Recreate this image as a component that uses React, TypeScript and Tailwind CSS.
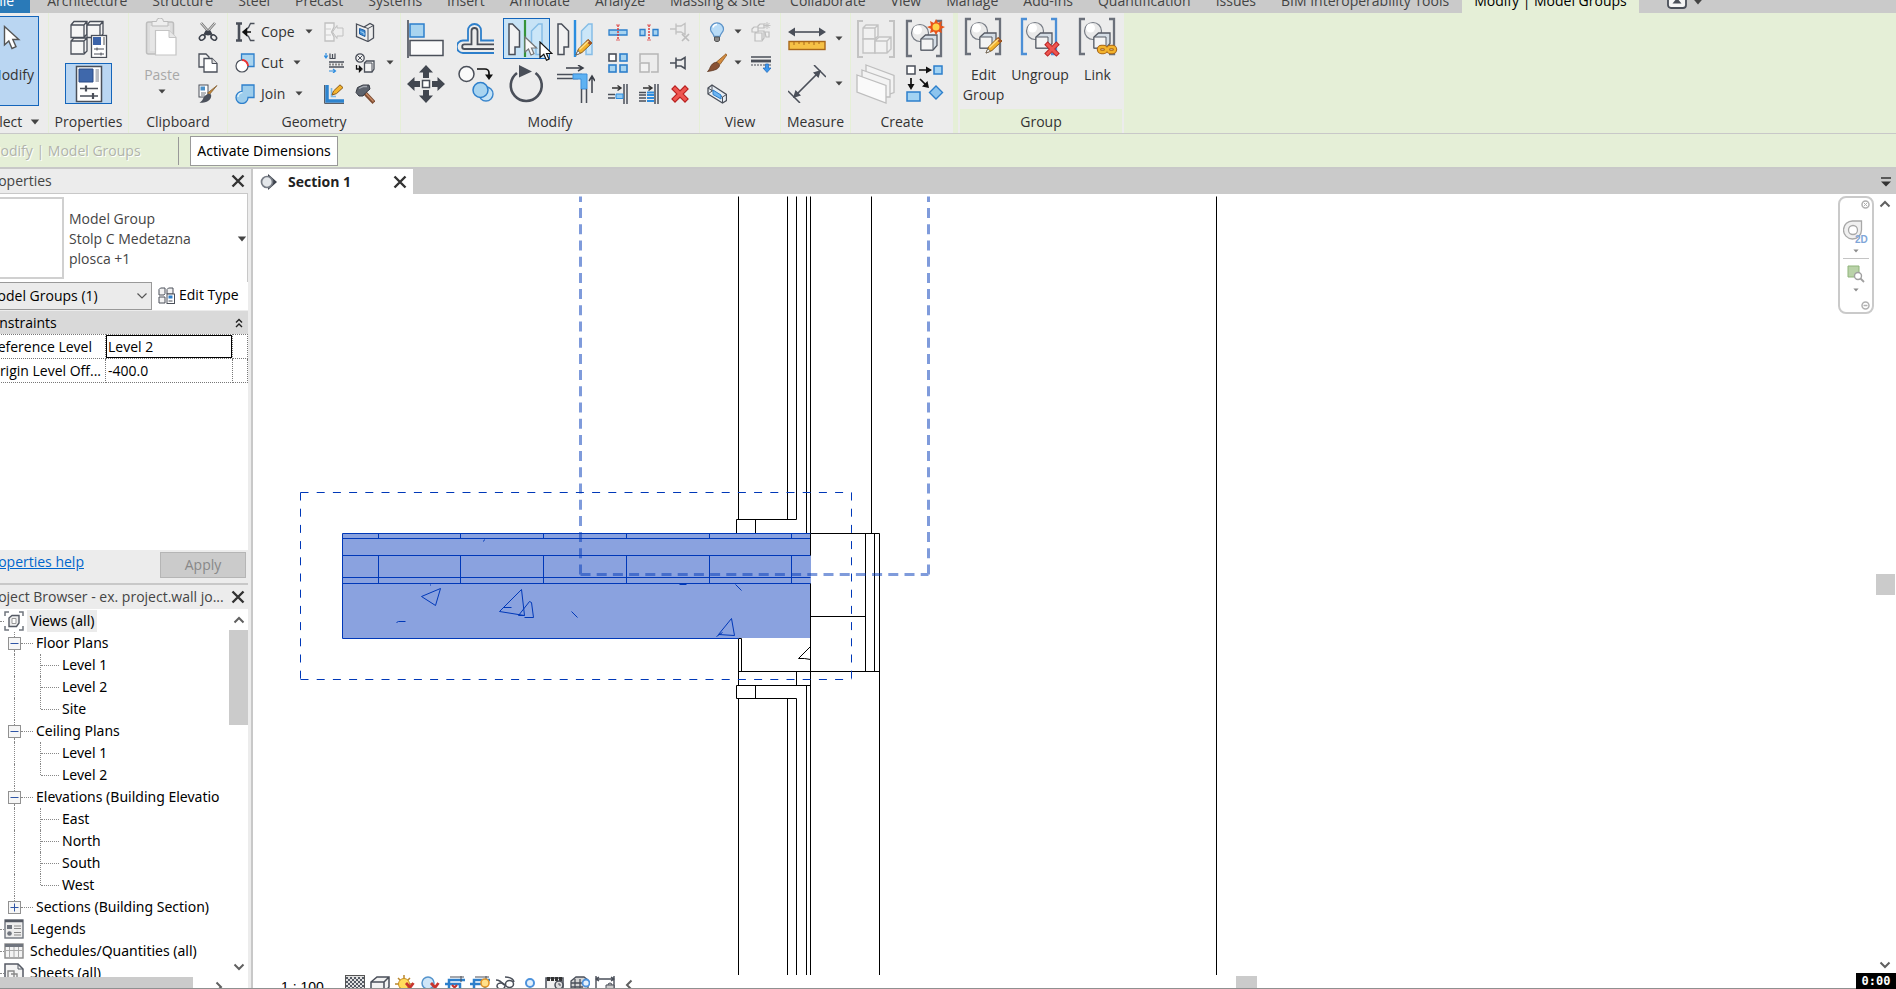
import React, { FC, ReactNode } from 'react';

const BLUE = '#0038b8';
const INK = '#4a4f59';

const tabs = [
  'Architecture',
  'Structure',
  'Steel',
  'Precast',
  'Systems',
  'Insert',
  'Annotate',
  'Analyze',
  'Massing & Site',
  'Collaborate',
  'View',
  'Manage',
  'Add-Ins',
  'Quantification',
  'Issues',
  'BIM Interoperability Tools',
];

/* ---------- small building blocks ---------- */

const Svg: FC<{ s: number; h?: number; children: ReactNode }> = ({ s, h, children }) => (
  <svg width={s} height={h || s} viewBox={`0 0 ${s} ${h || s}`} fill="none" className="block shrink-0">
    {children}
  </svg>
);

const Arrow: FC<{ big?: boolean; pale?: boolean }> = ({ big, pale }) => (
  <svg width={big ? 10 : pale ? 6 : 8} height={big ? 6 : pale ? 4 : 5} viewBox="0 0 8 5" className="shrink-0">
    <path d="M0.5 0.5h7L4 4.5z" fill={pale ? '#8c8c8c' : '#444'} />
  </svg>
);

const Close: FC = () => (
  <Svg s={14}>
    <path d="M1.500 1.500l11 11M12.500 1.500l-11 11" stroke="#333" strokeWidth="2.400" />
  </Svg>
);

const Chevron: FC<{ d: string }> = ({ d }) => (
  <Svg s={12}>
    <path d={d} stroke="#606060" strokeWidth="2" />
  </Svg>
);

const Tool: FC<{ label: string; className?: string; children: ReactNode }> = ({ label, className, children }) => (
  <button aria-label={label} className={`flex items-center justify-center ${className || ''}`}>
    {children}
  </button>
);

const Panel: FC<{ title: ReactNode; className: string; children: ReactNode; green?: boolean }> = ({
  title,
  className,
  children,
  green,
}) => (
  <section className={`flex shrink-0 flex-col border-r border-[#e5efd7] bg-[#ececec] ${className}`}>
    <div className="flex h-24 pt-[3px]">{children}</div>
    <h2 className={`flex h-6 items-center justify-center gap-2 pt-0.5 ${green ? 'mx-0.5 bg-[#e5efd7]' : ''}`}>{title}</h2>
  </section>
);

const Pencil: FC<{ x: number; y: number }> = ({ x, y }) => (
  <g transform={`translate(${x} ${y})`}>
    <path d="M1 17l2.500-6L13 1.500l4 3.500L7 14.500z" fill="#f3b32c" stroke="#8a5a16" />
    <path d="M11 3.500l2-2.200 4 3.600-2.200 2z" fill="#a5522a" />
    <path d="M4.500 11.500l9-8.500" stroke="#ffe08a" strokeWidth="1.500" />
    <path d="M1 17l1.800-4.300 2.600 2.600z" fill="#fff" stroke="#555" strokeWidth=".7" />
  </g>
);

const Cross: FC<{ x: number; y: number; s: number }> = ({ x, y, s }) => (
  <g transform={`translate(${x} ${y}) scale(${s / 16})`}>
    <path d="M3 3l10 10M13 3L3 13" stroke="#b8201f" strokeWidth="5.500" strokeLinecap="square" />
    <path d="M3 3l10 10M13 3L3 13" stroke="#ee5550" strokeWidth="3.300" strokeLinecap="square" />
  </g>
);

/* ---------- ribbon icons ---------- */

const CursorIcon = () => (
  <Svg s={18} h={26}>
    <path d="M1.500 1.500v18.500l4.300-4 3.200 7.500 4-1.800-3.200-7.200h6z" fill="#fff" stroke="#555" strokeWidth="1.400" />
  </Svg>
);

const TypePropsIcon = () => (
  <Svg s={38}>
    <g fill="#f5f5f5" stroke={INK} strokeWidth="1.300">
      <path d="M1 5l3-3.500h13V14l-3 3.500H1zM1 5h13v12M14 5l3-3.500" />
      <path d="M17 5l3-3.500h13V14l-3 3.500H17zM17 5h13v12M30 5l3-3.500" />
      <path d="M1 21l3-3h13v13l-3 3H1zM1 21h13v12M14 21l3-3" />
    </g>
    <rect x="21.500" y="15.500" width="15" height="22" fill="#fff" stroke={INK} strokeWidth="1.300" />
    <path d="M23 17h8v8h-8z" fill="#3c63a8" />
    <path d="M33 17h2v8h-2z" fill="#aaa" />
    <path d="M24 29h10M24 34h10M27 27.500v3M31 32.500v3" stroke={INK} />
  </Svg>
);

const PropsIcon = () => (
  <Svg s={28} h={38}>
    <rect x="1.500" y="1.500" width="25" height="35" fill="#fff" stroke={INK} strokeWidth="1.500" />
    <path d="M4 4h14v13H4z" fill="#3f68ab" stroke="#2b4b85" />
    <path d="M20.500 4H24v13h-3.500z" fill="#b9bcc2" />
    <path d="M5 23.500h18M5 31h18" stroke={INK} strokeWidth="1.500" />
    <path d="M11 20.500v6M18 28v6" stroke={INK} strokeWidth="2.200" />
  </Svg>
);

const PasteIcon = () => (
  <Svg s={34} h={40}>
    <rect x="1.500" y="4" width="27" height="32" rx="2" fill="#ddd" stroke="#bdbdbd" strokeWidth="1.500" />
    <path d="M5 8h20v25H5z" fill="#e6e6e6" />
    <path d="M7 3.500h4.500a3.500 3.500 0 017 0H23V8H7z" fill="#eee" stroke="#bbb" />
    <path d="M10.500 12.500H24l7 7V37H10.500z" fill="#fff" stroke="#c4c4c4" strokeWidth="1.200" />
    <path d="M24 12.500v7h7" stroke="#c4c4c4" fill="#e8e8e8" />
  </Svg>
);

const CutClipIcon = () => (
  <Svg s={20}>
    <path d="M3 1l11.500 13M17 1L5.500 14" stroke="#777" strokeWidth="2.600" />
    <path d="M3 1l11.500 13M17 1L5.500 14" stroke="#eee" strokeWidth=".9" />
    <path d="M7.500 8.500h5l2 4-4.500 1-4.500-1z" fill="#3c414b" />
    <ellipse cx="4.200" cy="15.500" rx="3" ry="2.300" transform="rotate(-40 4.200 15.500)" stroke="#3c414b" strokeWidth="1.600" />
    <ellipse cx="15.800" cy="15.500" rx="3" ry="2.300" transform="rotate(40 15.800 15.500)" stroke="#3c414b" strokeWidth="1.600" />
  </Svg>
);

const CopyIcon = () => (
  <Svg s={20}>
    <path d="M1 1h7l3 3v10H1z" fill="#f4f4f4" stroke={INK} strokeWidth="1.300" />
    <path d="M6 5.500h8l5 5V19H6z" fill="#fff" stroke={INK} strokeWidth="1.300" />
    <path d="M14 5.500v5h5" stroke={INK} fill="#ddd" />
  </Svg>
);

const MatchIcon = () => (
  <Svg s={20}>
    <rect x="1" y="1" width="9" height="12" fill="#fff" stroke={INK} />
    <path d="M2.500 2.500H7v4H2.500z" fill="#4a90c8" />
    <path d="M3 9h5M3 11h4" stroke={INK} strokeWidth=".8" />
    <path d="M19 1.500l-7.500 9-2-1.500z" fill="#c98b3c" stroke="#7a5526" strokeWidth=".7" />
    <path d="M13 10.500c1 3-1.500 6.500-5 7.500-3 .7-5 .8-6.500.8 2.500-1.500 3-3 4-5s4.500-5.500 7.500-3.300z" fill="#4c515b" />
  </Svg>
);

const CopeIcon = () => (
  <Svg s={20}>
    <path d="M1 1.500h6M1 18.500h6M4 2v16" stroke={INK} strokeWidth="2.600" />
    <path d="M19.500 1.500h-4l-2 4-3 2.500M19.500 18.500h-4l-2-4-3-2.500" stroke={INK} strokeWidth="1.300" />
    <path d="M16 10H9M11.500 7L8 10l3.500 3z" stroke="#111" strokeWidth="1.500" fill="#111" />
  </Svg>
);

const CutGeoIcon = () => (
  <Svg s={20}>
    <path d="M6.500 1h12.500v12.500h-7A6.500 6.500 0 006.500 7.500z" fill="#a9d4ef" stroke="#2d7fcb" strokeWidth="1.300" />
    <circle cx="7" cy="13" r="6" fill="#fff" stroke={INK} strokeWidth="1.200" />
    <path d="M7 7a6 6 0 016 6" stroke="#e33" strokeWidth="1.800" />
  </Svg>
);

const JoinIcon = () => (
  <Svg s={20}>
    <path d="M7 1h12v12.500h-6A6 6 0 117 7.500z" fill="#9dcdec" stroke="#2d7fcb" strokeWidth="1.300" />
    <path d="M3 13a4.500 4.500 0 014.500-4.500" stroke="#dff1fb" strokeWidth="1.500" />
  </Svg>
);

const WallOpenIcon = () => (
  <Svg s={20}>
    <path d="M1 1h9v4l-2.500 5L10 15v4H1z" fill="#f4f4f4" stroke="#c0c0c0" strokeWidth="1.300" />
    <path d="M1 7h6M1 13h6" stroke="#ccc" />
    <path d="M19 6v8h-6v2.500L8.500 10 13 3.500V6z" fill="#eee" stroke="#c0c0c0" />
  </Svg>
);

const FaceIcon = () => (
  <Svg s={20}>
    <path d="M1.500 2l7.500 3 6-3.500 3.500 2V16L13 19.500 1.500 14.500z" fill="#eee" stroke={INK} strokeWidth="1.300" />
    <path d="M9 5l4 1.500V19M13 6.500l5.500-3" stroke={INK} />
    <path d="M4.500 6.500l5.500 2v6l-5.500-2.500z" fill="#3d8bd4" stroke="#1f5fa5" />
    <path d="M5.500 9.500l3.500 1.500v2" stroke="#a9d4ef" />
  </Svg>
);

const WallJoinIcon = () => (
  <Svg s={20}>
    <path d="M2 0v4M.3 2.500L2 5l1.700-2.500M5 18h6M9 16l2.500 2L9 20" stroke="#2d8de0" strokeWidth="1.200" />
    <path d="M6 .5v5h5v-5M8.500 1v4" stroke={INK} strokeWidth="1.200" />
    <path d="M5 9h15M5 14h15" stroke={INK} strokeWidth="1.400" />
    <path d="M5 11.500h15" stroke="#888" strokeWidth="1.800" strokeDasharray="2 1" />
  </Svg>
);

const SplitFaceIcon = () => (
  <Svg s={20}>
    <circle cx="5" cy="5" r="4.200" fill="#eee" stroke={INK} strokeWidth="1.300" />
    <path d="M2.500 2.500l5 5M7.500 2.500l-5 5" stroke={INK} />
    <path d="M9.500 10l2-2H19v8l-2 3H9.500z" fill="#f4f4f4" stroke={INK} strokeWidth="1.300" />
    <path d="M9.500 10h7.500v9" stroke={INK} />
    <path d="M1.500 12v4H6M4.500 13.500L7 16l-2.500 2.500z" stroke="#111" strokeWidth="1.300" fill="none" />
  </Svg>
);

const PaintEdgeIcon = () => (
  <Svg s={20}>
    <path d="M3 1v16H20" stroke="#2d84cf" strokeWidth="3.500" />
    <path d="M7.500 4v8.500H12" stroke="#7ab8e8" strokeWidth="1.600" />
    <path d="M.6 1v18.400H20" stroke={INK} strokeWidth="1" />
    <path d="M8 11l1.500-4L16 .800l3 2.800-6.500 6z" fill="#f3b32c" stroke="#8a5a16" />
  </Svg>
);

const HammerIcon = () => (
  <Svg s={20}>
    <path d="M9 8l10 10.500" stroke="#7b4a30" strokeWidth="4" />
    <path d="M9.500 8l9 9.500" stroke="#c88a64" strokeWidth="1.300" />
    <path d="M1 8.500l1.500-5L8 1h6l1 4-4.500 4-2.500 3H4z" fill="#5d636d" stroke="#343942" />
    <path d="M4 4.500L8.500 2.500H12" stroke="#a4a9b1" strokeWidth="1.300" />
  </Svg>
);

const AlignIcon = () => (
  <Svg s={38}>
    <path d="M1 0v38" stroke={INK} strokeWidth="1.600" />
    <rect x="3" y="4" width="14" height="13" fill="#a8d4f0" stroke="#2d7fcb" strokeWidth="1.500" />
    <rect x="3" y="20.500" width="33" height="15" fill="#fafafa" stroke={INK} strokeWidth="1.500" />
  </Svg>
);

const OffsetIcon = () => (
  <Svg s={38} h={32}>
    <path d="M37 30H6a5 5 0 010-12.500h5V7.500a6.500 6.500 0 0113 0v10h13" stroke="#2d7fcb" strokeWidth="1.800" />
    <path d="M37 26H7.500a2.300 2.300 0 010-4.600h7V8a3 3 0 016 0v13.400H37" stroke={INK} strokeWidth="1.800" />
  </Svg>
);

const MirrorShape: FC<{ x: number; flip?: boolean }> = ({ x, flip }) => (
  <path
    d="M1 1h3.500L11.500 8v16H7v7.500H1z"
    transform={flip ? `translate(${x} 0) scale(-1 1)` : `translate(${x} 0)`}
    fill={flip ? '#cbe6f8' : '#f2f2f2'}
    stroke={flip ? '#86bde6' : INK}
    strokeWidth="1.500"
  />
);

const MirrorPickIcon = () => (
  <Svg s={38}>
    <g transform="translate(0 3)">
      <MirrorShape x={1} />
      <MirrorShape x={36} flip />
    </g>
    <path d="M18 0v37" stroke="#35953b" strokeWidth="2.200" />
    <path d="M18 17v15l3.500-3 2.500 6 3-1.300-2.500-5.700h5z" fill="#fafafa" stroke="#777" strokeWidth="1.200" />
  </Svg>
);

const MirrorDrawIcon = () => (
  <Svg s={38}>
    <g transform="translate(0 3)">
      <MirrorShape x={0} />
      <MirrorShape x={36} flip />
    </g>
    <path d="M18 0v37" stroke="#2b8ee0" strokeWidth="2.400" />
    <Pencil x={18} y={18} />
  </Svg>
);

const MoveIcon = () => (
  <Svg s={38}>
    <path
      d="M19 0l7 7.500h-4V13h-6V7.500h-4zM19 38l7-7.500h-4V25h-6v5.500h-4zM0 19l7.500-7v4H13v6H7.500v4zM38 19l-7.500-7v4H25v6h5.500v4z"
      fill="#424750"
    />
    <rect x="15.500" y="15.500" width="7" height="7" fill="#fff" stroke={INK} strokeWidth="1.500" />
  </Svg>
);

const CopyObjIcon = () => (
  <Svg s={38}>
    <circle cx="9.500" cy="9" r="7.500" fill="#fafafa" stroke={INK} strokeWidth="1.500" />
    <path d="M20 4h8a4 4 0 014 4v3" stroke="#111" strokeWidth="1.700" />
    <path d="M28 9.500h8L32 15z" fill="#111" />
    <circle cx="29" cy="29" r="7" fill="#c5e3f6" stroke="#3b86cc" strokeWidth="1.400" />
    <circle cx="23.500" cy="25" r="7.500" fill="#a8d4f0" stroke="#2d7fcb" strokeWidth="1.500" />
  </Svg>
);

const RotateIcon = () => (
  <Svg s={38}>
    <path d="M28.500 8A15.500 15.500 0 1110 8" stroke={INK} strokeWidth="2.600" />
    <path d="M12 0l13 6.500-13 6z" fill={INK} />
  </Svg>
);

const TrimIcon = () => (
  <Svg s={38}>
    <path d="M0 9.500h25M0 13.500h21" stroke={INK} strokeWidth="1.500" />
    <path d="M16 9v5h8v10h6V9z" fill="#5eb2f2" stroke="#3b8edb" />
    <path d="M24.500 24v14M29.500 24v14" stroke={INK} strokeWidth="1.500" />
    <path d="M9 3h16M21 0l5 3-5 3M35 28V12M32 16l3-5 3 5" stroke="#3b3f48" strokeWidth="1.500" />
  </Svg>
);

const SplitIcon: FC<{ gap?: boolean }> = ({ gap }) => (
  <Svg s={20}>
    {gap ? (
      <g fill="#a8d4f0" stroke="#2d7fcb" strokeWidth="1.300">
        <path d="M1 7.500h5v6H1zM14 7.500h5v6h-5z" />
      </g>
    ) : (
      <g fill="#a8d4f0" stroke="#2d7fcb" strokeWidth="1.300">
        <path d="M1 8h18v5H1z" />
      </g>
    )}
    <path d="M10 3v15" stroke="#d33" strokeWidth="1.400" strokeDasharray="2 1" />
    <path d="M8 3h4M8 18h4" stroke="#d66" />
  </Svg>
);

const ArrayIcon = () => (
  <Svg s={20}>
    <rect x="1" y="1" width="7" height="7" fill="#fff" stroke={INK} strokeWidth="1.600" />
    <g fill="#a8d4f0" stroke="#2d7fcb" strokeWidth="1.600">
      <rect x="12" y="1" width="7" height="7" />
      <rect x="1" y="12" width="7" height="7" />
      <rect x="12" y="12" width="7" height="7" />
    </g>
  </Svg>
);

const ScaleIcon = () => (
  <Svg s={20}>
    <path d="M1 9V1h18v18h-7" stroke="#b5b5b5" strokeWidth="1.500" />
    <rect x="1" y="10" width="9" height="9" fill="#f2f2f2" stroke="#b5b5b5" strokeWidth="1.500" />
  </Svg>
);

const PinIcon: FC<{ off?: boolean }> = ({ off }) => (
  <Svg s={20}>
    <path
      d="M0 10h6M6 4.500v11M6 7h5l4-2.500v11L11 13H6"
      stroke={off ? '#c2c2c2' : INK}
      strokeWidth={off ? '1.400' : '1.600'}
      transform={off ? 'translate(0 -3)' : undefined}
    />
    {off && <path d="M12 12l7 7M19 12l-7 7" stroke="#bdbdbd" strokeWidth="1.700" />}
  </Svg>
);

const ExtendIcon: FC<{ multi?: boolean }> = ({ multi }) => (
  <Svg s={20}>
    <path d="M16 0v20M19 0v20" stroke={INK} strokeWidth="1.500" />
    <path d="M4 4h8M9.500 1.500L13 4 9.500 6.500" stroke="#333" strokeWidth="1.400" />
    {multi ? (
      <>
        <path d="M0 8.500h7M0 11h7M0 14h7M0 17h7" stroke={INK} strokeWidth="1.300" />
        <path d="M8 8.500h7M8 11h7M8 14h7M8 17h7" stroke="#2d8de0" strokeWidth="1.800" />
      </>
    ) : (
      <>
        <path d="M0 10.500h7M0 14h7" stroke={INK} strokeWidth="1.300" />
        <path d="M8 10h7v4.500H8z" fill="#8ec8f2" stroke="#2d8de0" />
      </>
    )}
  </Svg>
);

const DeleteIcon = () => (
  <Svg s={20}>
    <Cross x={2} y={2} s={16} />
  </Svg>
);

const BulbIcon = () => (
  <Svg s={20}>
    <path d="M10 .8a6.500 6.500 0 016.500 6.500c0 3-3 4-3.500 7H7c-.5-3-3.500-4-3.500-7A6.500 6.500 0 0110 .8z" fill="#b9dcf7" stroke="#5d93c8" strokeWidth="1.200" />
    <path d="M6 5.500a4 4 0 014-3" stroke="#fff" strokeWidth="1.500" />
    <path d="M7.500 15h5v3.500l-1.500 1H9l-1.500-1z" fill="#888" stroke="#555" />
  </Svg>
);

const DisplaceIcon = () => (
  <Svg s={20}>
    <g fill="#efefef" stroke="#bdbdbd" strokeWidth="1.200">
      <path d="M4 11l2-2h7v7l-2 3H4zM4 11h7v7" />
      <path d="M1 7l2-2h4v5H1zM7 4l2-2h4v4H7zM14 10h4v5h-3z" />
    </g>
    <path d="M16 0v7M12.500 3.500h7M13.500 1l5 5M18.500 1l-5 5" stroke="#c2c2c2" />
  </Svg>
);

const BrushIcon = () => (
  <Svg s={20}>
    <path d="M19 .8l1 1L13 11.500 9.500 9z" fill="#d48b3e" stroke="#8b5620" strokeWidth=".8" />
    <path d="M12.500 12c0 4-5 5.500-12 6.500 2.500-2 2-4 4-6.500 1.500-2 4-3 5.500-2.500z" fill="#8a5234" stroke="#5d3722" strokeWidth=".8" />
  </Svg>
);

const LineworkIcon = () => (
  <Svg s={20}>
    <path d="M0 4h20" stroke={INK} strokeWidth="1.500" />
    <path d="M0 8h20" stroke={INK} strokeWidth="2.800" />
    <path d="M0 12h20" stroke={INK} strokeWidth="1.200" strokeDasharray="2 1" />
    <path d="M14.500 11h3v4h2.500L16 19.500 12 15h2.500z" fill="#3b97ee" stroke="#1d63b5" strokeWidth=".7" />
  </Svg>
);

const SectionBoxIcon = () => (
  <Svg s={20}>
    <path d="M1 4l4-3 14.500 9.500v6L15.500 19 1 10z" fill="#e8eef4" stroke={INK} strokeWidth="1.300" />
    <path d="M1 4l14.500 9 4-2.500M15.500 13v6M5 1v6L1 10" stroke={INK} />
    <path d="M6 6l8 5v4L6 10.500z" fill="#6db5f2" stroke="#2d7fcb" />
  </Svg>
);

const RulerIcon = () => (
  <Svg s={38} h={26}>
    <path d="M3 6h31" stroke={INK} strokeWidth="1.600" />
    <path d="M0 6l7-4.500v9zM38 6l-7-4.500v9z" fill={INK} />
    <rect x="1" y="15.500" width="36" height="8" fill="#f6c145" stroke="#a8671a" strokeWidth="1.400" />
    <path d="M6 15v4M11 15v3M16 15v4M21 15v3M26 15v4M31 15v3" stroke="#a8671a" />
  </Svg>
);

const DimIcon = () => (
  <Svg s={38}>
    <path d="M7 31L31 7" stroke={INK} strokeWidth="1.700" />
    <path d="M5 33l2.500-8 5.500 5.500zM33 5l-8 2.500 5.500 5.500z" fill={INK} />
    <path d="M0 26l12 12M26 0l12 12" stroke={INK} strokeWidth="1.500" />
  </Svg>
);

const CreateGroupIcon: FC = () => (
  <Svg s={38}>
    <path d="M6 1H1v36h5M32 1h5v36h-5" stroke="#c3c3c3" strokeWidth="2" />
    <g fill="#f1f1f1" stroke="#c3c3c3" strokeWidth="1.400">
      <path d="M6 8l3-3h12v11l-3 3H6zM6 8h12v10M18 8l3-3" />
      <path d="M6 19h12v14H6z" />
      <path d="M18 21l4-4h12v12l-4 4H18zM18 21h12v12M30 21l4-4" />
    </g>
  </Svg>
);

const GroupIcon: FC<{ blue?: boolean; children: ReactNode }> = ({ blue, children }) => (
  <Svg s={40}>
    <path d="M7 2H2v35h5M31 2h5v35h-5" stroke={blue ? '#4c8fd6' : '#6c717b'} strokeWidth="2.300" />
    <circle cx="15" cy="14" r="8.500" fill="#eaeaea" stroke="#777c85" strokeWidth="1.200" />
    <circle cx="12.500" cy="11" r="4.500" fill="#fff" />
    <path d="M16 20l4.500-4H32v10.500L28 31H16z" fill="#d5dde5" stroke="#555a64" strokeWidth="1.300" />
    <path d="M16 20h12v11H16z" fill="#f4f4f4" stroke="#555a64" />
    {children}
  </Svg>
);

const AssemblyIcon = () => (
  <Svg s={40}>
    <g fill="#f3f3f3" stroke="#bebebe" strokeWidth="1.300">
      <path d="M10 1l28 10.500v17l-6 2L10 20z" />
      <path d="M6 6l28 10v17H28L6 22z" />
      <path d="M1 11l29 10.500V39L1 28z" fill="#fafafa" />
    </g>
  </Svg>
);

const SimilarIcon = () => (
  <Svg s={40}>
    <rect x="2" y="2" width="8" height="8" fill="#fff" stroke={INK} strokeWidth="1.500" />
    <rect x="29" y="2" width="8" height="8" fill="#a2d3f3" stroke="#2d7fcb" strokeWidth="1.500" />
    <rect x="2" y="28" width="13" height="9" fill="#a2d3f3" stroke="#2d7fcb" strokeWidth="1.500" />
    <path d="M31 22l6.500 6.500L31 35l-6.500-6.500z" fill="#8cc4ee" stroke="#2d7fcb" strokeWidth="1.400" />
    <path d="M14 6h9M6 14v8M15 15l6 6" stroke="#111" strokeWidth="1.700" />
    <path d="M21 2.500L27 6l-6 3.500zM2.500 20h7L6 26zM24 24l-7-1.500 5.500-5.500z" fill="#111" />
  </Svg>
);

/* ---------- ribbon ---------- */

const GeoRow: FC<{ icon: ReactNode; label: string }> = ({ icon, label }) => (
  <button className="flex items-center gap-1.5">
    {icon}
    <span>{label}</span>
    <span className="ml-1">
      <Arrow />
    </span>
  </button>
);

const Ribbon: FC = () => (
  <div className="flex h-[121px] shrink-0 border-b border-[#c8c8c8] bg-[#e5efd7] text-[#333]">
    <Panel
      className="w-[73px]"
      title={
        <>
          Select <Arrow big />
        </>
      }
    >
      <button className="ml-2 flex h-[90px] w-[55px] flex-col items-center justify-between border border-[#1465bb] bg-[#bad6f2] pt-2 pb-5">
        <CursorIcon />
        Modify
      </button>
    </Panel>

    <Panel className="w-20" title="Properties">
      <div className="grid w-full grid-rows-[45px_45px] place-items-center">
        <Tool label="Type Properties">
          <TypePropsIcon />
        </Tool>
        <Tool label="Properties" className="h-[41px] w-[47px] border border-[#1465bb] bg-[#bad6f2]">
          <PropsIcon />
        </Tool>
      </div>
    </Panel>

    <Panel className="w-[99px]" title="Clipboard">
      <button className="flex w-[66px] flex-col items-center pt-0.5 text-[#a8a8a8]">
        <PasteIcon />
        <span className="pt-[7px] pb-1">Paste</span>
        <Arrow />
      </button>
      <div className="grid grid-rows-[31px_31px_31px] items-center pl-[3px]">
        <Tool label="Cut to Clipboard"><CutClipIcon /></Tool>
        <Tool label="Copy to Clipboard"><CopyIcon /></Tool>
        <Tool label="Match Type Properties"><MatchIcon /></Tool>
      </div>
    </Panel>

    <Panel className="w-[173px]" title="Geometry">
      <div className="grid w-24 shrink-0 grid-rows-[31px_31px_31px] items-center pl-[7px]">
        <GeoRow icon={<CopeIcon />} label="Cope" />
        <GeoRow icon={<CutGeoIcon />} label="Cut" />
        <GeoRow icon={<JoinIcon />} label="Join" />
      </div>
      <div className="grid grid-cols-[31px_31px_14px] grid-rows-[31px_31px_31px] items-center">
        <Tool label="Wall Opening" className="w-5"><WallOpenIcon /></Tool>
        <Tool label="Split Face" className="w-5"><FaceIcon /></Tool>
        <span />
        <Tool label="Beam Joins" className="w-5"><WallJoinIcon /></Tool>
        <Tool label="Paint" className="w-5"><SplitFaceIcon /></Tool>
        <Arrow />
        <Tool label="Wall Joins" className="w-5"><PaintEdgeIcon /></Tool>
        <Tool label="Demolish" className="w-5"><HammerIcon /></Tool>
      </div>
    </Panel>

    <Panel className="w-[299px]" title="Modify">
      <div className="grid grid-cols-[50px_50px_50px_50px] grid-rows-[45px_45px] place-items-center">
        <Tool label="Align"><AlignIcon /></Tool>
        <Tool label="Offset"><OffsetIcon /></Tool>
        <Tool label="Mirror - Pick Axis" className="relative h-[41px] w-[47px] border border-[#1465bb] bg-[#c7e3f6]">
          <MirrorPickIcon />
          <span className="absolute -right-1 -bottom-1">
            <svg width="14" height="21" viewBox="0 0 14 21">
              <path d="M1 1v15.500l3.800-3.200 2.700 6 2.500-1.200-2.500-5.600H13z" fill="#fff" stroke="#111" strokeWidth="1.200" />
            </svg>
          </span>
        </Tool>
        <Tool label="Mirror - Draw Axis"><MirrorDrawIcon /></Tool>
        <Tool label="Move"><MoveIcon /></Tool>
        <Tool label="Copy"><CopyObjIcon /></Tool>
        <Tool label="Rotate"><RotateIcon /></Tool>
        <Tool label="Trim/Extend to Corner"><TrimIcon /></Tool>
      </div>
      <div className="grid grid-cols-[31px_31px_20px] grid-rows-[31px_31px_31px] items-center pl-[7px]">
        <Tool label="Split Element" className="w-5"><SplitIcon /></Tool>
        <Tool label="Split with Gap" className="w-5"><SplitIcon gap /></Tool>
        <Tool label="Unpin" className="w-5"><PinIcon off /></Tool>
        <Tool label="Array" className="w-5"><ArrayIcon /></Tool>
        <Tool label="Scale" className="w-5"><ScaleIcon /></Tool>
        <Tool label="Pin" className="w-5"><PinIcon /></Tool>
        <Tool label="Trim/Extend Single" className="w-5"><ExtendIcon /></Tool>
        <Tool label="Trim/Extend Multiple" className="w-5"><ExtendIcon multi /></Tool>
        <Tool label="Delete" className="w-5"><DeleteIcon /></Tool>
      </div>
    </Panel>

    <Panel className="w-[81px]" title="View">
      <div className="grid grid-cols-[27px_17px_20px] grid-rows-[31px_31px_31px] items-center pl-[7px]">
        <Tool label="Hide in View" className="w-5"><BulbIcon /></Tool>
        <Arrow />
        <Tool label="Displace Elements"><DisplaceIcon /></Tool>
        <Tool label="Override Graphics" className="w-5"><BrushIcon /></Tool>
        <Arrow />
        <Tool label="Linework"><LineworkIcon /></Tool>
        <Tool label="Selection Box" className="w-5"><SectionBoxIcon /></Tool>
      </div>
    </Panel>

    <Panel className="w-[70px]" title="Measure">
      <div className="grid grid-cols-[47px_8px] grid-rows-[45px_45px] items-center pl-[7px]">
        <Tool label="Measure" className="w-[38px]"><RulerIcon /></Tool>
        <Arrow />
        <Tool label="Aligned Dimension" className="w-[38px]"><DimIcon /></Tool>
        <Arrow />
      </div>
    </Panel>

    <Panel className="w-[103px]" title="Create">
      <div className="grid w-[98px] grid-cols-2 grid-rows-[45px_45px] place-items-center">
        <Tool label="Create Assembly"><CreateGroupIcon /></Tool>
        <Tool label="Create Group">
          <GroupIcon>
            <path d="M31 0l2 4 4-2-1 4.500 4 1.500-4 2 1 4-4-1.500L31 16l-2-3.500-4 1.500 1-4-4-2 4-1.500L25 2l4 2z" fill="#e8541a" />
            <circle cx="31" cy="8" r="3.500" fill="#ffd34a" />
          </GroupIcon>
        </Tool>
        <Tool label="Create Parts"><AssemblyIcon /></Tool>
        <Tool label="Create Similar"><SimilarIcon /></Tool>
      </div>
    </Panel>

    <Panel className="ml-1 w-[167px]" title="Group" green>
      <div className="grid w-full grid-cols-[51px_62px_53px] leading-5">
        <button className="flex flex-col items-center pt-px">
          <GroupIcon>
            <Pencil x={21} y={19} />
          </GroupIcon>
          <span className="pt-2">
            Edit
            <br />
            Group
          </span>
        </button>
        <button className="flex flex-col items-center pt-px">
          <GroupIcon blue>
            <Cross x={25} y={25} s={14} />
          </GroupIcon>
          <span className="pt-2">Ungroup</span>
        </button>
        <button className="flex flex-col items-center pt-px">
          <GroupIcon>
            <g stroke="#a8671a" strokeWidth="4.500">
              <rect x="21" y="30" width="7" height="5" rx="2.500" />
              <rect x="30" y="30" width="7" height="5" rx="2.500" />
            </g>
            <g stroke="#f3b32c" strokeWidth="2.300">
              <rect x="21" y="30" width="7" height="5" rx="2.500" />
              <rect x="30" y="30" width="7" height="5" rx="2.500" />
            </g>
          </GroupIcon>
          <span className="pt-2">Link</span>
        </button>
      </div>
    </Panel>
  </div>
);

/* ---------- left column ---------- */

const PaneTitle: FC<{ children: ReactNode }> = ({ children }) => (
  <div className="flex h-6 shrink-0 items-center justify-between pr-[3px] pl-2 text-[#444]">
    <h2 className="truncate">{children}</h2>
    <button aria-label="Close pane" className="shrink-0">
      <Close />
    </button>
  </div>
);

const Properties: FC = () => (
  <section className="flex h-[416px] shrink-0 flex-col border-b-2 border-[#c8c8c8]">
    <PaneTitle>Properties</PaneTitle>
    <div className="flex h-[89px] items-center border-t border-r border-[#c8c8c8] bg-white">
      <div className="h-[82px] w-[88px] border-2 border-[#d0d0d0]" />
      <div className="flex flex-1 items-center justify-between pt-0.5 pl-[5px] leading-5 text-[#444]">
        <p>
          Model Group
          <br />
          Stolp C Medetazna
          <br />
          plosca +1
        </p>
        <button aria-label="Change type">
          <Arrow big />
        </button>
      </div>
    </div>
    <div className="flex h-7 items-center bg-white">
      <div className="relative">
        <select
          aria-label="Selection filter"
          className="h-7 w-44 appearance-none border border-[#999] bg-[#ebebeb] pl-2 text-black"
        >
          <option>Model Groups (1)</option>
        </select>
        <span className="pointer-events-none absolute top-2 right-1">
          <Svg s={12}>
            <path d="M1.500 3.500L6 8l4.500-4.500" stroke="#555" strokeWidth="1.200" />
          </Svg>
        </span>
      </div>
      <button className="flex items-center gap-1 pb-0.5 pl-1.5 text-black">
        <Svg s={17}>
          <path d="M1 2.500L2.500 1H7v5.500L6 8H1zM9 2.500L10.500 1H15v6H9zM1 10h6v6H1z" fill="#f3f3f3" stroke={INK} />
          <rect x="9" y="7" width="7.500" height="9.500" fill="#fff" stroke={INK} />
          <path d="M10.500 8.500h4v3h-4z" fill="#2d7fcb" />
          <path d="M10.500 14h4" stroke={INK} />
        </Svg>
        Edit Type
      </button>
    </div>
    <div className="flex-1 bg-white text-black">
      <div className="flex h-6 items-center justify-between border-t border-[#ececec] bg-[#d9d9d9] pr-1 pl-1.5">
        Constraints
        <button aria-label="Collapse Constraints">
          <Svg s={10}>
            <path d="M2 4.500L5 1.500l3 3M2 9l3-3 3 3" stroke="#222" strokeWidth="1.400" />
          </Svg>
        </button>
      </div>
      <table className="w-full table-fixed border-collapse">
        <tbody>
          <tr className="h-6">
            <th scope="row" className="w-[129px] border border-dotted border-[#777] p-0 pl-3 text-left font-normal">
              <label htmlFor="ref-level">Reference Level</label>
            </th>
            <td className="w-[127px] border border-dotted border-[#777] p-0">
              <input id="ref-level" defaultValue="Level 2" className="block h-[23px] w-full border border-black px-px" />
            </td>
            <td className="border border-dotted border-[#777] p-0" />
          </tr>
          <tr className="h-6">
            <th scope="row" className="border border-dotted border-[#777] p-0 pl-3 text-left font-normal">
              <label htmlFor="origin-offset">Origin Level Off...</label>
            </th>
            <td className="border border-dotted border-[#777] p-0">
              <input id="origin-offset" defaultValue="-400.0" className="block h-[22px] w-full px-0.5" />
            </td>
            <td className="border border-dotted border-[#777] p-0" />
          </tr>
        </tbody>
      </table>
    </div>
    <div className="flex h-[33px] items-start justify-between pt-0.5 pr-0.5 pl-2">
      <a href="#help" className="text-[#0066cc] underline">
        Properties help
      </a>
      <button disabled className="h-[26px] w-[86px] border border-[#b5b5b5] bg-[#cbcbcb] text-[#888]">
        Apply
      </button>
    </div>
  </section>
);

const ViewsIcon = () => (
  <Svg s={20}>
    <path d="M1 5V1h4M15 1h4v4M19 15v4h-4M5 19H1v-4" stroke="#70757e" strokeWidth="1.500" />
    <path d="M5 7l3-2.500h7V12l-2.500 3.500H5z" fill="#eee" stroke="#555a64" strokeWidth="1.400" />
    <path d="M8 7.500h4v5H8z" fill="#fff" stroke="#999" />
  </Svg>
);

const LegendIcon = () => (
  <Svg s={20}>
    <rect x="1" y="1" width="18" height="18" fill="#eee" stroke="#70757e" strokeWidth="1.400" />
    <path d="M1 2h18" stroke="#555a64" strokeWidth="2.500" />
    <path d="M3 6h5v4H3z" fill="#70757e" />
    <circle cx="5.500" cy="14.500" r="2.300" fill="#70757e" />
    <path d="M10 7h7M10 9.500h7M10 13.500h7M10 16h7" stroke="#888" />
  </Svg>
);

const ScheduleIcon = () => (
  <Svg s={20}>
    <rect x="1" y="3" width="18" height="14" fill="#f4f4f4" stroke="#888" strokeWidth="1.400" />
    <path d="M1 4.500h18" stroke="#70757e" strokeWidth="3" />
    <path d="M5.500 6v11M10 6v11M14.500 6v11M1 9.500h18" stroke="#aaa" />
  </Svg>
);

const SheetIcon = () => (
  <Svg s={20}>
    <path d="M1 1h13l5 5v13H1z" fill="#f4f4f4" stroke="#555a64" strokeWidth="1.500" />
    <path d="M14 1v5h5" stroke="#555a64" />
    <path d="M4 19V8h6v11M7 11h6v8" stroke="#888" strokeWidth="1.400" />
  </Svg>
);

const RootRow: FC<{ icon: ReactNode; label: string; selected?: boolean }> = ({ icon, label, selected }) => (
  <div className="flex h-[22px] items-center">
    <span className="w-1 border-t border-dotted border-[#888]" />
    {icon}
    <span className={`ml-[3px] px-[3px] leading-[22px] ${selected ? 'bg-[#ebebeb]' : ''}`}>{label}</span>
  </div>
);

const BranchRow: FC<{ label: string; closed?: boolean }> = ({ label, closed }) => (
  <div className="flex h-[22px] items-center">
    <span className="ml-2 flex h-full w-[13px] flex-col items-center">
      <span className="w-px flex-1 border-l border-dotted border-[#888]" />
      <button aria-label={closed ? `Expand ${label}` : `Collapse ${label}`}>
        <Svg s={13}>
          <rect x=".5" y=".5" width="12" height="12" fill="#f6f6f6" stroke="#919191" />
          <path d={closed ? 'M2.500 6.500h8M6.500 2.500v8' : 'M2.500 6.500h8'} stroke="#2f55a5" />
        </Svg>
      </button>
      <span className={`w-px flex-1 ${closed ? '' : 'border-l border-dotted border-[#888]'}`} />
    </span>
    <span className="mr-[3px] w-3 border-t border-dotted border-[#888]" />
    <span className="whitespace-nowrap">{label}</span>
  </div>
);

const LeafRow: FC<{ label: string; last?: boolean }> = ({ label, last }) => (
  <div className="flex h-[22px] items-center">
    <span className="ml-3.5 h-full w-[26px] border-l border-dotted border-[#888]" />
    <span className={`w-px self-start border-l border-dotted border-[#888] ${last ? 'h-[11px]' : 'h-full'}`} />
    <span className="mr-[3px] w-[18px] border-t border-dotted border-[#888]" />
    <span>{label}</span>
  </div>
);

const branches = [
  { label: 'Floor Plans', items: ['Level 1', 'Level 2', 'Site'] },
  { label: 'Ceiling Plans', items: ['Level 1', 'Level 2'] },
  { label: 'Elevations (Building Elevatio', items: ['East', 'North', 'South', 'West'] },
];

const ProjectBrowser: FC = () => (
  <section className="flex min-h-0 flex-1 flex-col">
    <PaneTitle>Project Browser - ex. project.wall jo...</PaneTitle>
    <div className="flex min-h-0 flex-1 bg-white">
      <div className="min-w-0 flex-1 overflow-hidden pt-px pl-6 font-['Noto_Sans','Open_Sans',sans-serif] text-black">
        <RootRow icon={<ViewsIcon />} label="Views (all)" selected />
        {branches.map((branch) => (
          <div key={branch.label}>
            <BranchRow label={branch.label} />
            {branch.items.map((item, i) => (
              <LeafRow key={item} label={item} last={i === branch.items.length - 1} />
            ))}
          </div>
        ))}
        <BranchRow label="Sections (Building Section)" closed />
        <RootRow icon={<LegendIcon />} label="Legends" />
        <RootRow icon={<ScheduleIcon />} label="Schedules/Quantities (all)" />
        <RootRow icon={<SheetIcon />} label="Sheets (all)" />
      </div>
      <div className="flex w-[19px] flex-col items-center">
        <span className="flex h-[21px] items-center">
          <Chevron d="M1.500 8.500L6 4l4.500 4.500" />
        </span>
        <span className="h-[95px] w-full bg-[#cbcbcb]" />
        <span className="mt-auto pb-1">
          <Chevron d="M1.500 3.500L6 8l4.500-4.500" />
        </span>
      </div>
    </div>
    <div className="flex h-[11px] items-start overflow-hidden bg-white">
      <span className="h-full w-[217px] bg-[#cbcbcb]" />
      <span className="ml-5 pt-1">
        <Chevron d="M3.500 1.500L8 6l-4.500 4.500" />
      </span>
    </div>
  </section>
);

/* ---------- drawing ---------- */

const slabJoints = [378, 460, 543, 626, 709, 791];

const Drawing: FC = () => (
  <svg className="absolute inset-0 h-full w-full" fill="none" strokeWidth="1">
    {/* model space is offset by the docked panels */}
    <g transform="translate(-252.5 -193.5)">
      <path
        stroke="#000"
        d="M738 196V519M787 196V519M796 196V519M806 196V533M810 196V975M871 196V533M736 533V519H796M755 519V533M810 533H879V975M865 533V671M874 533V671M810 616H865M738 671H879M738 685V638H741V671M796 671V685M736 698V685H810M755 685V698M736 698H796M738 698V975M787 698V975M796 698V975M806 685V975M810 646L798 658L804 658L810 659M1216 196V975"
      />
      <path fill="#8aa2df" d="M342 533H810.500V637.500H342z" />
      <g stroke={BLUE}>
        <path d="M810 533H342V638H738M342 538H810M342 555H810M342 577H810M342 583H810" />
        {slabJoints.map((x) => (
          <path key={x} d={`M${x} 533V538M${x} 555V583`} />
        ))}
        <path d="M421 596L440 588L435 605zM521 589L499 611L524 615L521 589M503 607H511M529 601L518 615H524M529 601L531 602L533 617H524M396 622L398 621H405M571 611L577 617M484 539L483 541M430 584v1M679 584H686M735 584L741 590M731 618L718 634L734 635zM716 636L722 632" />
        <path d="M300 492H851M300 679H851" strokeDasharray="8 8.200" />
        <path d="M300 492V679M851 492V679" strokeDasharray="8 8.200" />
      </g>
      <path d="M810 533V555M810 583V638" stroke="#000" />
      <path d="M580 574V196M580 574H928M928 574V196" stroke={BLUE} strokeOpacity=".5" strokeWidth="3" strokeDasharray="10 6.200" />
    </g>
  </svg>
);

const NavBar: FC = () => (
  <div className="absolute top-0.5 right-[22px] flex h-[118px] w-9 flex-col items-center justify-between rounded-lg border-2 border-[#cacaca] bg-white py-0.5">
    <button aria-label="Close navigation bar" className="self-end pr-0.5">
      <Svg s={9}>
        <circle cx="4.500" cy="4.500" r="3.500" stroke="#b0b0b0" strokeWidth="1.500" />
        <path d="M3 3l3 3M6 3L3 6" stroke="#b0b0b0" />
      </Svg>
    </button>
    <button className="flex flex-col items-center pt-1.5" aria-label="Steering wheel">
      <svg width="26" height="24" viewBox="0 0 26 24" fill="none">
        <path d="M10 1h8.500v9a9 9 0 11-8.500-9z" fill="#f0f0f0" stroke="#a8a8a8" strokeWidth="1.300" />
        <circle cx="10" cy="10" r="4.500" fill="#fff" stroke="#a8a8a8" strokeWidth="1.300" />
        <text x="12" y="22.500" fontSize="10" fontWeight="bold" fontFamily="Liberation Sans, sans-serif" fill="#7fa6d8">
          2D
        </text>
      </svg>
    </button>
    <Arrow pale />
    <span className="w-[26px] border-t border-[#c4c4c4]" />
    <button aria-label="Zoom region">
      <Svg s={18}>
        <path d="M1 1h11v11H1z" fill="#b9d2a8" stroke="#8fb47a" />
        <circle cx="11" cy="11" r="3.500" fill="#fff" stroke="#a0a0a0" strokeWidth="1.400" />
        <path d="M13.500 13.500L17 17" stroke="#a0a0a0" strokeWidth="1.800" />
      </Svg>
    </button>
    <span className="pb-1">
      <Arrow pale />
    </span>
    <button aria-label="Customize" className="self-end pr-0.5">
      <Svg s={9}>
        <circle cx="4.500" cy="4.500" r="3.500" stroke="#b0b0b0" strokeWidth="1.500" />
        <path d="M2.500 4.500h4" stroke="#b0b0b0" strokeWidth="1.500" />
      </Svg>
    </button>
  </div>
);

const DetailIcon = () => (
  <Svg s={20}>
    <rect x=".5" y=".5" width="19" height="19" fill="#e2e2e2" stroke="#555" />
    <path d="M1 3h18M1 7h18M1 11h18" stroke="#555a64" strokeWidth="1.800" strokeDasharray="2 2" />
    <path d="M3 5h16M3 9h16M3 13h16" stroke="#555a64" strokeWidth="1.800" strokeDasharray="2 2" />
  </Svg>
);
const BoxIcon = () => (
  <Svg s={20}>
    <path d="M1 7l6-5h12v10l-5 6H1zM1 7h13v10M14 7l5-5" fill="#f2f2f2" stroke={INK} strokeWidth="1.500" />
  </Svg>
);
const SunIcon = () => (
  <Svg s={20}>
    <path d="M9 0v18M0 9h18M3 3l12 12M15 3L3 15" stroke="#b8862f" strokeWidth="1.500" />
    <circle cx="9" cy="9" r="5.500" fill="#ffdc5c" stroke="#c98d22" />
    <path d="M11 8l4 4.500L18.500 8" stroke="#c8352e" strokeWidth="2.800" />
  </Svg>
);
const ShadowIcon = () => (
  <Svg s={20}>
    <circle cx="8" cy="8" r="6" fill="#cfe6f8" stroke="#5594cc" strokeWidth="1.500" />
    <path d="M11 8l4 4.500L18.500 8" stroke="#c8352e" strokeWidth="2.800" />
  </Svg>
);
const CropIcon: FC<{ lamp?: boolean }> = ({ lamp }) => (
  <Svg s={20}>
    <path d="M4 16V5h16M0 9h15v9" stroke="#2d7fcb" strokeWidth="2.500" />
    <path d="M16 1v6M5 2h14" stroke={INK} />
    {lamp ? (
      <circle cx="15" cy="8" r="4" fill="#ffe08a" stroke="#e0952a" strokeWidth="1.600" />
    ) : (
      <path d="M7 10l5 5M12 10l-5 5" stroke="#c8352e" strokeWidth="2" />
    )}
  </Svg>
);
const GlassesIcon = () => (
  <Svg s={20}>
    <path d="M1 5c3 0 5 1 8 5M10 2c4 0 8 1 9 5" stroke={INK} strokeWidth="1.500" />
    <ellipse cx="6" cy="11" rx="4" ry="3" stroke={INK} strokeWidth="1.500" />
    <ellipse cx="14.500" cy="9" rx="4" ry="3.500" stroke={INK} strokeWidth="1.500" />
  </Svg>
);
const RevealIcon = () => (
  <Svg s={20}>
    <circle cx="10" cy="8" r="4" fill="#e4f1fd" stroke="#4c92dc" strokeWidth="2" />
  </Svg>
);
const TempIcon = () => (
  <Svg s={20}>
    <path d="M1 3h17v14H1z" fill="#f0f0f0" stroke={INK} strokeWidth="1.500" />
    <path d="M2 4h15" stroke="#333" strokeWidth="4" strokeDasharray="3 1" />
    <circle cx="14" cy="10" r="4" fill="#ddd" stroke={INK} strokeWidth="1.500" />
    <path d="M14 8v2h2" stroke={INK} />
  </Svg>
);
const AnalyticIcon = () => (
  <Svg s={20}>
    <path d="M1 6l5-4h8l4 3v10H1zM1 8h12M1 12h12M5 4v12M10 4v12" fill="#d5d5d5" stroke={INK} strokeWidth="1.300" />
    <circle cx="16" cy="8" r="3.500" fill="#e4f1fd" stroke="#4c92dc" strokeWidth="1.800" />
  </Svg>
);
const ConstraintIcon = () => (
  <Svg s={20}>
    <path d="M1 1v18M19 1v18M1 4h18M4 2L1 4l3 2M16 2l3 2-3 2" stroke={INK} strokeWidth="1.400" />
    <path d="M11 10h8v6h-8zM13 10a2 2 0 014 0" fill="#ccc" stroke={INK} />
  </Svg>
);

const ViewControls: FC = () => (
  <div className="flex h-[13px] items-start overflow-hidden pl-7 text-black">
    <button className="w-16 pt-0.5 text-left font-['Liberation_Sans',sans-serif] whitespace-pre">1 : 100</button>
    <div className="flex gap-[5px]">
      <Tool label="Detail Level"><DetailIcon /></Tool>
      <Tool label="Visual Style"><BoxIcon /></Tool>
      <Tool label="Sun Path"><SunIcon /></Tool>
      <Tool label="Shadows"><ShadowIcon /></Tool>
      <Tool label="Crop View"><CropIcon /></Tool>
      <Tool label="Show Crop Region"><CropIcon lamp /></Tool>
      <Tool label="Temporary Hide/Isolate"><GlassesIcon /></Tool>
      <Tool label="Reveal Hidden"><RevealIcon /></Tool>
      <Tool label="Temporary View Properties"><TempIcon /></Tool>
      <Tool label="Analytical Model"><AnalyticIcon /></Tool>
      <Tool label="Reveal Constraints"><ConstraintIcon /></Tool>
    </div>
    <span className="pt-1 pl-2">
      <Chevron d="M8.500 1.500L4 6l4.500 4.500" />
    </span>
  </div>
);

const SectionView: FC = () => (
  <main className="flex min-w-0 flex-1 flex-col bg-white">
    <div className="flex h-[25px] shrink-0 items-center justify-between bg-[#cacaca] pr-[5px]">
      <div className="flex h-full w-40 items-center bg-white pr-1.5 pl-[7px]">
        <Svg s={18}>
          <path d="M8 1l9 8-9 8z" fill="#3c414b" />
          <circle cx="7" cy="9" r="5.500" fill="#e4e7ea" stroke="#777c85" strokeWidth="1.700" />
        </Svg>
        <h1 className="flex-1 pl-2.5 font-bold text-[#222]">Section 1</h1>
        <button aria-label="Close Section 1">
          <Close />
        </button>
      </div>
      <button aria-label="Open views">
        <Svg s={10}>
          <path d="M0 1h10" stroke="#333" strokeWidth="1.500" />
          <path d="M0 4.500h10L5 9.500z" fill="#333" />
        </Svg>
      </button>
    </div>
    <div className="relative flex min-h-0 flex-1 justify-end">
      <Drawing />
      <NavBar />
      <div className="flex w-[22px] flex-col items-center justify-between py-1">
        <Chevron d="M1.500 8.500L6 4l4.500 4.500" />
        <span className="h-[21px] w-[19px] bg-[#cbcbcb]" />
        <Chevron d="M1.500 3.500L6 8l4.500-4.500" />
      </div>
    </div>
    <div className="grid grid-cols-[983px_21px_1fr]">
      <ViewControls />
      <span className="mt-px bg-[#cbcbcb]" />
    </div>
  </main>
);

const App: FC = () => {
  return (
    <div className="relative h-screen overflow-hidden bg-white font-['Open_Sans',sans-serif] text-sm leading-5">
      <div className="-ml-6 flex h-full flex-col border-b border-[#909090]">
        <nav className="flex h-[13px] shrink-0 items-end gap-px overflow-hidden bg-[#cacaca] whitespace-nowrap text-[#444]">
          <button className="mr-1 bg-[#2a7ab8] px-4 pb-0.5 text-white">File</button>
          {tabs.map((tab) => (
            <button key={tab} className="px-3 pb-0.5">
              {tab}
            </button>
          ))}
          <button className="bg-[#e5efd7] px-3 pb-0.5 text-black">Modify | Model Groups</button>
          <button aria-label="Minimize ribbon" className="ml-[27px] flex items-start gap-1.5 pb-1">
            <Svg s={20} h={14}>
              <rect x="1" y="-4" width="18" height="17" rx="3" fill="#f5f5f5" stroke={INK} strokeWidth="1.800" />
              <path d="M5.500 8.500L10 3l4.500 5.500z" fill={INK} />
            </Svg>
            <span className="pt-1">
              <Arrow big />
            </span>
          </button>
        </nav>

        <Ribbon />

        <div className="flex h-[35px] shrink-0 items-center border-b-2 border-[#c8c8c8] bg-[#e5efd7] pl-3">
          <span className="w-[191px] border-r border-[#999] py-1 text-[#b0b3ab] [text-shadow:1px_1px_0_#fff]">
            Modify | Model Groups
          </span>
          <button className="ml-[11px] h-[30px] w-[148px] border border-[#999] bg-white font-['Noto_Sans','Open_Sans',sans-serif] text-black">
            Activate Dimensions
          </button>
        </div>

        <div className="flex min-h-0 flex-1">
          <aside className="flex w-[277px] shrink-0 flex-col border-r-2 border-[#c8c8c8] bg-[#ececec] pr-[3px]">
            <Properties />
            <ProjectBrowser />
          </aside>
          <SectionView />
        </div>
      </div>
      <time className="absolute right-0 bottom-0 flex h-4 w-10 items-center justify-center bg-black font-['DejaVu_Sans_Mono',monospace] text-xs font-bold text-white">
        0:00
      </time>
    </div>
  );
};

export default App;
